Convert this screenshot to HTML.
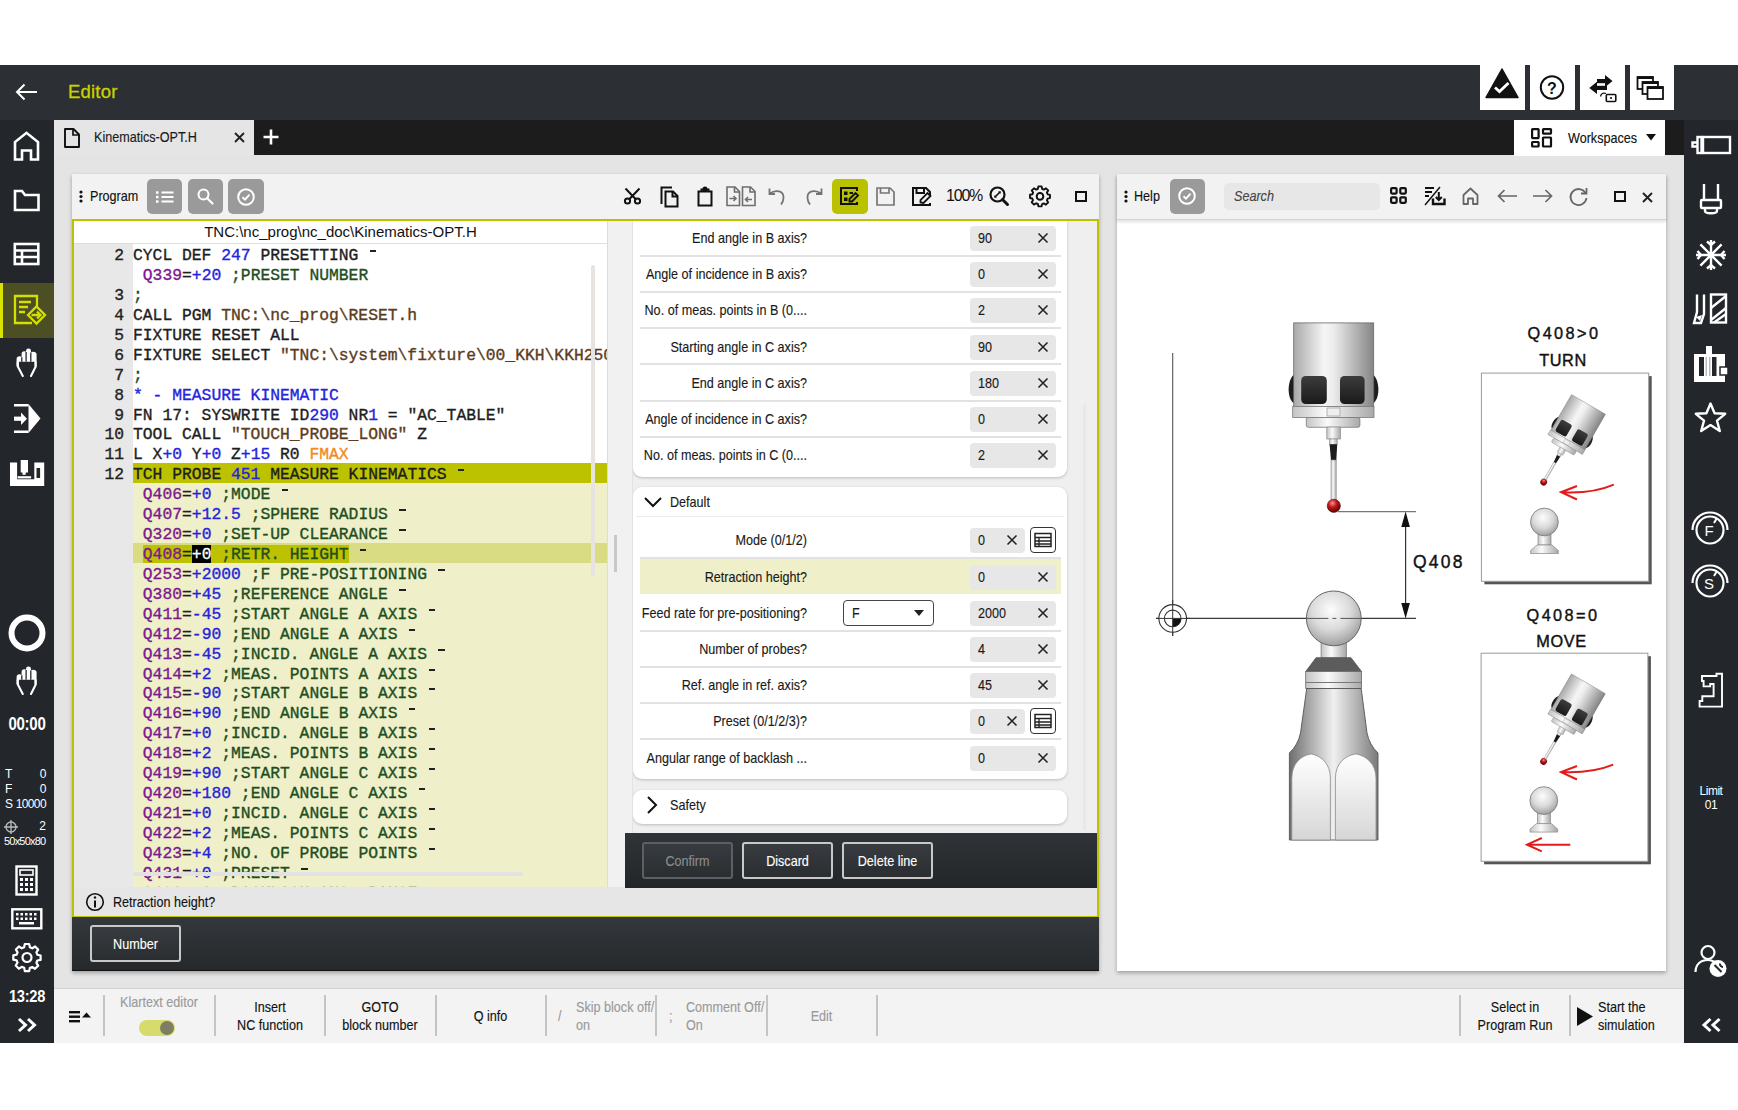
<!DOCTYPE html>
<html><head><meta charset="utf-8">
<style>
*{box-sizing:border-box;margin:0;padding:0}
html,body{width:1738px;height:1110px;overflow:hidden;background:#fff;position:relative;font-family:"Liberation Sans",sans-serif;color:#1a1a1a}
.a{position:absolute}
.s{font-size:15px;white-space:nowrap;transform:scaleX(.84);transform-origin:0 50%;-webkit-text-stroke:0.15px currentColor}
.sr{transform-origin:100% 50%}.sc{transform-origin:50% 50%}
.m{font-family:"Liberation Mono",monospace;font-size:16.33px;white-space:pre;line-height:20px;-webkit-text-stroke:0.35px currentColor;padding-top:2px}
svg{position:absolute;overflow:visible}
</style></head><body>

<!-- header -->
<div class="a" style="left:0;top:65px;width:1738px;height:55px;background:#2c3034"></div>
<!-- left sidebar -->
<div class="a" style="left:0;top:120px;width:54px;height:923px;background:#23272b"></div>
<!-- right sidebar -->
<div class="a" style="left:1684px;top:120px;width:54px;height:923px;background:#23272b"></div>
<!-- tab bar -->
<div class="a" style="left:54px;top:120px;width:1630px;height:35px;background:#1c1c1c"></div>
<!-- main bg -->
<div class="a" style="left:54px;top:155px;width:1630px;height:833px;background:#e4e4e4"></div>
<!-- bottom bar -->
<div class="a" style="left:54px;top:988px;width:1630px;height:55px;background:#f3f3f3;border-top:1px solid #d2d2d2"></div>
<!-- EDITOR PANEL -->
<div class="a" style="left:72px;top:174px;width:1027px;height:797px;background:#f2f2f2;box-shadow:0 2px 4px rgba(0,0,0,.3)"></div>
<div class="a" style="left:72px;top:219px;width:1027px;height:699px;border:2px solid #bcc200;background:#e6e6e6"></div>
<!-- splitter -->
<div class="a" style="left:607px;top:221px;width:26px;height:666px;background:#f1f1f1;border-left:1px solid #dcdcdc;border-right:1px solid #e2e2e2"></div>
<div class="a" style="left:614px;top:535px;width:3px;height:37px;background:#c8c8c8"></div>
<!-- form area bg -->
<div class="a" style="left:633px;top:221px;width:464px;height:612px;background:#efefef"></div>
<!-- form action bar -->
<div class="a" style="left:625px;top:833px;width:472px;height:55px;background:linear-gradient(#303438,#222629)"></div>
<!-- info bar -->
<div class="a" style="left:74px;top:888px;width:1023px;height:28px;background:#e6e6e6"></div>
<!-- number bar -->
<div class="a" style="left:72px;top:917px;width:1027px;height:54px;background:linear-gradient(#34383c,#25292c);border-bottom:1px solid #111"></div>
<!-- HELP PANEL -->
<div class="a" style="left:1117px;top:174px;width:549px;height:797px;background:#fff;box-shadow:0 2px 4px rgba(0,0,0,.3)"></div>
<div class="a" style="left:1117px;top:174px;width:549px;height:46px;background:#f2f2f2;border-bottom:1px solid #d4d4d4;box-shadow:0 2px 3px rgba(0,0,0,.12)"></div>

<!-- editor toolbar -->
<svg width="4" height="14" style="left:79px;top:190px"><circle cx="2" cy="2" r="1.6" fill="#111"/><circle cx="2" cy="6.5" r="1.6" fill="#111"/><circle cx="2" cy="11" r="1.6" fill="#111"/></svg>
<div class="a s" style="left:90px;top:187px;line-height:18px;color:#111">Program</div>
<div class="a" style="left:147px;top:179px;width:35px;height:35px;background:#9a9a9a;border-radius:5px"></div>
<div class="a" style="left:188px;top:179px;width:35px;height:35px;background:#9a9a9a;border-radius:5px"></div>
<div class="a" style="left:228px;top:179px;width:36px;height:35px;background:#9a9a9a;border-radius:5px"></div>
<svg width="20" height="14" style="left:155px;top:190px"><g fill="#fff"><rect x="1" y="1.3" width="2.5" height="2.5"/><rect x="1" y="5.8" width="2.5" height="2.5"/><rect x="1" y="10.3" width="2.5" height="2.5"/><rect x="6.5" y="1.5" width="12" height="2"/><rect x="6.5" y="6" width="12" height="2"/><rect x="6.5" y="10.5" width="12" height="2"/></g></svg>
<svg width="20" height="20" style="left:196px;top:187px"><circle cx="7.5" cy="7.5" r="5" fill="none" stroke="#fff" stroke-width="2"/><path d="M11 11L16.5 16.5" stroke="#fff" stroke-width="2.2" stroke-linecap="round"/></svg>
<svg width="20" height="20" style="left:236px;top:187px"><circle cx="10" cy="10" r="7.8" fill="none" stroke="#fff" stroke-width="2"/><path d="M6.5 10.2L9 12.6L13.5 7.6" fill="none" stroke="#fff" stroke-width="2"/></svg>
<!-- scissors -->
<svg width="20" height="18" style="left:623px;top:187px"><g fill="none" stroke="#111" stroke-width="2"><path d="M2.5 1.5L14 13.5M16.5 1.5L5 13.5"/><circle cx="4.5" cy="14" r="2.6" fill="#f2f2f2"/><circle cx="14.5" cy="14" r="2.6" fill="#f2f2f2"/></g></svg>
<!-- copy -->
<svg width="20" height="22" style="left:660px;top:185.5px"><g fill="none" stroke="#111" stroke-width="2"><path d="M1.5 18V1.5H12"/><path d="M5.5 5.5H13L17.5 10V20.5H5.5Z"/><path d="M12.5 5.5V10.5H17.5"/></g></svg>
<!-- paste -->
<svg width="17" height="21" style="left:697px;top:186px"><g fill="none" stroke="#111" stroke-width="2"><rect x="1.5" y="5.5" width="13" height="14"/><path d="M4.5 5.5V3.5H11.5V5.5"/><circle cx="8" cy="3" r="1.5" fill="#111"/></g></svg>
<!-- insert docs (gray) -->
<svg width="31" height="21" style="left:726px;top:186px"><g fill="none" stroke="#6e6e6e" stroke-width="1.6"><path d="M1 1H9L13.5 5.5V19.5H1Z"/><path d="M8.5 1V6H13.5"/><path d="M16.5 1H24.5L29 5.5V19.5H16.5Z"/><path d="M24 1V6H29"/><path d="M3.5 12.5H10M7.5 10L10 12.5L7.5 15"/><path d="M26 13.5H19.5M22 11L19.5 13.5L22 16"/></g></svg>
<!-- undo / redo (gray) -->
<svg width="18" height="18" style="left:768px;top:187px"><path d="M2 6.5C8 2 16 4 15.5 11C15.3 14 14.5 16 13 17.5M1.5 1.5V7H7" fill="none" stroke="#737373" stroke-width="1.8"/></svg>
<svg width="18" height="18" style="left:805px;top:187px"><path d="M16 6.5C10 2 2 4 2.5 11C2.7 14 3.5 16 5 17.5M16.5 1.5V7H11" fill="none" stroke="#737373" stroke-width="1.8"/></svg>
<!-- active edit btn -->
<div class="a" style="left:832px;top:179px;width:36px;height:35px;background:#bac200;border-radius:5px"></div>
<svg width="20" height="19" style="left:840px;top:187px"><g fill="none" stroke="#111" stroke-width="2"><path d="M17 4V1H1V17H17V15"/></g><rect x="4" y="4.5" width="3.5" height="3.5" fill="#111"/><rect x="4" y="10.5" width="3.5" height="3.5" fill="#111"/><path d="M9.5 6H13M9.5 12L15.5 6L18 8.5L12 14.5H9.5Z" fill="none" stroke="#111" stroke-width="1.9"/></svg>
<!-- save gray -->
<svg width="19" height="19" style="left:876px;top:187px"><g fill="none" stroke="#777" stroke-width="1.7"><path d="M1 1H14L18 5V18H1Z"/><path d="M4.5 1V6H13V1"/></g></svg>
<!-- save as -->
<svg width="20" height="19" style="left:912px;top:187px"><g fill="none" stroke="#111" stroke-width="2"><path d="M18 8V5L14 1H1V18H18V16"/><path d="M4.5 1V6H12V1"/><path d="M8.5 15.5V13L15.5 6L18.5 9L11.5 16Z" stroke-width="1.8"/></g></svg>
<div class="a" style="left:946px;top:187px;line-height:18px;letter-spacing:-1.2px;color:#111">100%</div>
<!-- zoom -->
<svg width="21" height="21" style="left:989px;top:186px"><circle cx="8.5" cy="8.5" r="7" fill="none" stroke="#111" stroke-width="2.2"/><path d="M13.5 13.5L18.5 18.5" stroke="#111" stroke-width="3" stroke-linecap="round"/><path d="M6 9.5V11H7.5M11 7.5V6H9.5M6 11L11 6" fill="none" stroke="#111" stroke-width="1.6"/></svg>
<!-- gear -->
<svg width="22" height="22" viewBox="-11 -11 22 22" style="left:1029px;top:185px"><path id="gearp" d="M-1.6 -9.6H1.6L2.1 -7.2L3.9 -6.4L6 -7.7L8.2 -5.5L6.9 -3.4L7.7 -1.6L10 -1.1V2.1L7.6 2.6L6.9 4.3L8.2 6.4L5.9 8.7L3.8 7.4L2.1 8.1L1.6 10.4H-1.6L-2.1 8L-3.9 7.3L-6 8.6L-8.3 6.3L-7 4.2L-7.7 2.5L-10 2V-1.2L-7.6 -1.7L-6.9 -3.4L-8.2 -5.5L-6 -7.7L-3.9 -6.4L-2.1 -7.2Z" fill="none" stroke="#111" stroke-width="1.9" stroke-linejoin="round"/><circle cx="0" cy="0.4" r="3.3" fill="none" stroke="#111" stroke-width="2"/></svg>
<div class="a" style="left:1075px;top:191px;width:12px;height:11px;border:2.4px solid #111"></div>

<div class="a" style="left:74px;top:221px;width:533px;height:666px;background:#fff;overflow:hidden">
<div class="a" style="left:0;top:0;width:533px;height:23px;background:#fff;border-bottom:1px solid #dedede;text-align:center;font-size:15px;white-space:nowrap;line-height:22px;color:#111">TNC:\nc_prog\nc_doc\Kinematics-OPT.H</div>
<div class="a" style="left:0;top:23px;width:59px;height:643px;background:#e8e8e8"></div>
<div class="a m" style="left:0;top:23.2px;width:50px;text-align:right;color:#222">2</div>
<div class="a m" style="left:59px;top:23.2px"><span style="color:#1e1e1e">CYCL DEF </span><span style="color:#2424dc">247</span><span style="color:#1e1e1e"> PRESETTING </span><span style="display:inline-block;width:9.8px;height:11px;vertical-align:top;position:relative"><i style="position:absolute;left:1.5px;top:4px;width:6.5px;height:2px;background:#222"></i></span></div>
<div class="a m" style="left:59px;top:43.12px"><span style="color:#1e1e1e"> </span><span style="color:#7e1890">Q339</span><span style="color:#1e1e1e">=</span><span style="color:#2424dc">+20</span><span style="color:#1e4e1e"> ;PRESET NUMBER</span></div>
<div class="a m" style="left:0;top:63.04px;width:50px;text-align:right;color:#222">3</div>
<div class="a m" style="left:59px;top:63.04px"><span style="color:#1e4e1e">;</span></div>
<div class="a m" style="left:0;top:82.96px;width:50px;text-align:right;color:#222">4</div>
<div class="a m" style="left:59px;top:82.96px"><span style="color:#1e1e1e">CALL PGM </span><span style="color:#5c3c1c">TNC:\nc_prog\RESET.h</span></div>
<div class="a m" style="left:0;top:102.88px;width:50px;text-align:right;color:#222">5</div>
<div class="a m" style="left:59px;top:102.88px"><span style="color:#1e1e1e">FIXTURE RESET ALL</span></div>
<div class="a m" style="left:0;top:122.8px;width:50px;text-align:right;color:#222">6</div>
<div class="a m" style="left:59px;top:122.8px"><span style="color:#1e1e1e">FIXTURE SELECT </span><span style="color:#5c3c1c">"TNC:\system\fixture\00_KKH\KKH250"</span></div>
<div class="a m" style="left:0;top:142.72px;width:50px;text-align:right;color:#222">7</div>
<div class="a m" style="left:59px;top:142.72px"><span style="color:#1e4e1e">;</span></div>
<div class="a m" style="left:0;top:162.64px;width:50px;text-align:right;color:#222">8</div>
<div class="a m" style="left:59px;top:162.64px"><span style="color:#2424dc">* - MEASURE KINEMATIC</span></div>
<div class="a m" style="left:0;top:182.56px;width:50px;text-align:right;color:#222">9</div>
<div class="a m" style="left:59px;top:182.56px"><span style="color:#1e1e1e">FN 17: SYSWRITE ID</span><span style="color:#2424dc">290</span><span style="color:#1e1e1e"> NR</span><span style="color:#2424dc">1</span><span style="color:#1e1e1e"> = "AC_TABLE"</span></div>
<div class="a m" style="left:0;top:202.48px;width:50px;text-align:right;color:#222">10</div>
<div class="a m" style="left:59px;top:202.48px"><span style="color:#1e1e1e">TOOL CALL </span><span style="color:#5c3c1c">"TOUCH_PROBE_LONG"</span><span style="color:#1e1e1e"> Z</span></div>
<div class="a m" style="left:0;top:222.4px;width:50px;text-align:right;color:#222">11</div>
<div class="a m" style="left:59px;top:222.4px"><span style="color:#1e1e1e">L X</span><span style="color:#2424dc">+0</span><span style="color:#1e1e1e"> Y</span><span style="color:#2424dc">+0</span><span style="color:#1e1e1e"> Z</span><span style="color:#2424dc">+15</span><span style="color:#1e1e1e"> R0 </span><span style="color:#f28a1e">FMAX</span></div>
<div class="a" style="left:59px;top:242.32px;width:474px;height:20px;background:#bcc200"></div>
<div class="a m" style="left:0;top:242.32px;width:50px;text-align:right;color:#222">12</div>
<div class="a m" style="left:59px;top:242.32px"><span style="color:#1e1e1e">TCH PROBE </span><span style="color:#2424dc">451</span><span style="color:#1e1e1e"> MEASURE KINEMATICS </span><span style="display:inline-block;width:9.8px;height:11px;vertical-align:top;position:relative"><i style="position:absolute;left:1.5px;top:4px;width:6.5px;height:2px;background:#222"></i></span></div>
<div class="a" style="left:59px;top:262.24px;width:474px;height:20px;background:#eff0ca"></div>
<div class="a m" style="left:59px;top:262.24px"><span style="color:#1e1e1e"> </span><span style="color:#7e1890">Q406</span><span style="color:#1e1e1e">=</span><span style="color:#2424dc">+0</span><span style="color:#1e4e1e"> ;MODE</span><span style="color:#1e1e1e"> </span><span style="display:inline-block;width:9.8px;height:11px;vertical-align:top;position:relative"><i style="position:absolute;left:1.5px;top:4px;width:6.5px;height:2px;background:#222"></i></span></div>
<div class="a" style="left:59px;top:282.16px;width:474px;height:20px;background:#eff0ca"></div>
<div class="a m" style="left:59px;top:282.16px"><span style="color:#1e1e1e"> </span><span style="color:#7e1890">Q407</span><span style="color:#1e1e1e">=</span><span style="color:#2424dc">+12.5</span><span style="color:#1e4e1e"> ;SPHERE RADIUS</span><span style="color:#1e1e1e"> </span><span style="display:inline-block;width:9.8px;height:11px;vertical-align:top;position:relative"><i style="position:absolute;left:1.5px;top:4px;width:6.5px;height:2px;background:#222"></i></span></div>
<div class="a" style="left:59px;top:302.08px;width:474px;height:20px;background:#eff0ca"></div>
<div class="a m" style="left:59px;top:302.08px"><span style="color:#1e1e1e"> </span><span style="color:#7e1890">Q320</span><span style="color:#1e1e1e">=</span><span style="color:#2424dc">+0</span><span style="color:#1e4e1e"> ;SET-UP CLEARANCE</span><span style="color:#1e1e1e"> </span><span style="display:inline-block;width:9.8px;height:11px;vertical-align:top;position:relative"><i style="position:absolute;left:1.5px;top:4px;width:6.5px;height:2px;background:#222"></i></span></div>
<div class="a" style="left:59px;top:322.0px;width:474px;height:20px;background:#d9dc82"></div>
<div class="a m" style="left:59px;top:322.0px"><span style="color:#1e1e1e"> </span><span style="background:#bcc200"><span style="color:#7e1890">Q408</span><span style="color:#1e1e1e">=</span><span style="background:#000;color:#fff">+0</span><span style="color:#1e4e1e"> ;RETR. HEIGHT</span></span><span style="color:#1e1e1e"> </span><span style="display:inline-block;width:9.8px;height:11px;vertical-align:top;position:relative"><i style="position:absolute;left:1.5px;top:4px;width:6.5px;height:2px;background:#222"></i></span></div>
<div class="a" style="left:59px;top:341.92px;width:474px;height:20px;background:#eff0ca"></div>
<div class="a m" style="left:59px;top:341.92px"><span style="color:#1e1e1e"> </span><span style="color:#7e1890">Q253</span><span style="color:#1e1e1e">=</span><span style="color:#2424dc">+2000</span><span style="color:#1e4e1e"> ;F PRE-POSITIONING</span><span style="color:#1e1e1e"> </span><span style="display:inline-block;width:9.8px;height:11px;vertical-align:top;position:relative"><i style="position:absolute;left:1.5px;top:4px;width:6.5px;height:2px;background:#222"></i></span></div>
<div class="a" style="left:59px;top:361.84px;width:474px;height:20px;background:#eff0ca"></div>
<div class="a m" style="left:59px;top:361.84px"><span style="color:#1e1e1e"> </span><span style="color:#7e1890">Q380</span><span style="color:#1e1e1e">=</span><span style="color:#2424dc">+45</span><span style="color:#1e4e1e"> ;REFERENCE ANGLE</span><span style="color:#1e1e1e"> </span><span style="display:inline-block;width:9.8px;height:11px;vertical-align:top;position:relative"><i style="position:absolute;left:1.5px;top:4px;width:6.5px;height:2px;background:#222"></i></span></div>
<div class="a" style="left:59px;top:381.76px;width:474px;height:20px;background:#eff0ca"></div>
<div class="a m" style="left:59px;top:381.76px"><span style="color:#1e1e1e"> </span><span style="color:#7e1890">Q411</span><span style="color:#1e1e1e">=</span><span style="color:#2424dc">-45</span><span style="color:#1e4e1e"> ;START ANGLE A AXIS</span><span style="color:#1e1e1e"> </span><span style="display:inline-block;width:9.8px;height:11px;vertical-align:top;position:relative"><i style="position:absolute;left:1.5px;top:4px;width:6.5px;height:2px;background:#222"></i></span></div>
<div class="a" style="left:59px;top:401.68px;width:474px;height:20px;background:#eff0ca"></div>
<div class="a m" style="left:59px;top:401.68px"><span style="color:#1e1e1e"> </span><span style="color:#7e1890">Q412</span><span style="color:#1e1e1e">=</span><span style="color:#2424dc">-90</span><span style="color:#1e4e1e"> ;END ANGLE A AXIS</span><span style="color:#1e1e1e"> </span><span style="display:inline-block;width:9.8px;height:11px;vertical-align:top;position:relative"><i style="position:absolute;left:1.5px;top:4px;width:6.5px;height:2px;background:#222"></i></span></div>
<div class="a" style="left:59px;top:421.6px;width:474px;height:20px;background:#eff0ca"></div>
<div class="a m" style="left:59px;top:421.6px"><span style="color:#1e1e1e"> </span><span style="color:#7e1890">Q413</span><span style="color:#1e1e1e">=</span><span style="color:#2424dc">-45</span><span style="color:#1e4e1e"> ;INCID. ANGLE A AXIS</span><span style="color:#1e1e1e"> </span><span style="display:inline-block;width:9.8px;height:11px;vertical-align:top;position:relative"><i style="position:absolute;left:1.5px;top:4px;width:6.5px;height:2px;background:#222"></i></span></div>
<div class="a" style="left:59px;top:441.52px;width:474px;height:20px;background:#eff0ca"></div>
<div class="a m" style="left:59px;top:441.52px"><span style="color:#1e1e1e"> </span><span style="color:#7e1890">Q414</span><span style="color:#1e1e1e">=</span><span style="color:#2424dc">+2</span><span style="color:#1e4e1e"> ;MEAS. POINTS A AXIS</span><span style="color:#1e1e1e"> </span><span style="display:inline-block;width:9.8px;height:11px;vertical-align:top;position:relative"><i style="position:absolute;left:1.5px;top:4px;width:6.5px;height:2px;background:#222"></i></span></div>
<div class="a" style="left:59px;top:461.44px;width:474px;height:20px;background:#eff0ca"></div>
<div class="a m" style="left:59px;top:461.44px"><span style="color:#1e1e1e"> </span><span style="color:#7e1890">Q415</span><span style="color:#1e1e1e">=</span><span style="color:#2424dc">-90</span><span style="color:#1e4e1e"> ;START ANGLE B AXIS</span><span style="color:#1e1e1e"> </span><span style="display:inline-block;width:9.8px;height:11px;vertical-align:top;position:relative"><i style="position:absolute;left:1.5px;top:4px;width:6.5px;height:2px;background:#222"></i></span></div>
<div class="a" style="left:59px;top:481.36px;width:474px;height:20px;background:#eff0ca"></div>
<div class="a m" style="left:59px;top:481.36px"><span style="color:#1e1e1e"> </span><span style="color:#7e1890">Q416</span><span style="color:#1e1e1e">=</span><span style="color:#2424dc">+90</span><span style="color:#1e4e1e"> ;END ANGLE B AXIS</span><span style="color:#1e1e1e"> </span><span style="display:inline-block;width:9.8px;height:11px;vertical-align:top;position:relative"><i style="position:absolute;left:1.5px;top:4px;width:6.5px;height:2px;background:#222"></i></span></div>
<div class="a" style="left:59px;top:501.28px;width:474px;height:20px;background:#eff0ca"></div>
<div class="a m" style="left:59px;top:501.28px"><span style="color:#1e1e1e"> </span><span style="color:#7e1890">Q417</span><span style="color:#1e1e1e">=</span><span style="color:#2424dc">+0</span><span style="color:#1e4e1e"> ;INCID. ANGLE B AXIS</span><span style="color:#1e1e1e"> </span><span style="display:inline-block;width:9.8px;height:11px;vertical-align:top;position:relative"><i style="position:absolute;left:1.5px;top:4px;width:6.5px;height:2px;background:#222"></i></span></div>
<div class="a" style="left:59px;top:521.2px;width:474px;height:20px;background:#eff0ca"></div>
<div class="a m" style="left:59px;top:521.2px"><span style="color:#1e1e1e"> </span><span style="color:#7e1890">Q418</span><span style="color:#1e1e1e">=</span><span style="color:#2424dc">+2</span><span style="color:#1e4e1e"> ;MEAS. POINTS B AXIS</span><span style="color:#1e1e1e"> </span><span style="display:inline-block;width:9.8px;height:11px;vertical-align:top;position:relative"><i style="position:absolute;left:1.5px;top:4px;width:6.5px;height:2px;background:#222"></i></span></div>
<div class="a" style="left:59px;top:541.12px;width:474px;height:20px;background:#eff0ca"></div>
<div class="a m" style="left:59px;top:541.12px"><span style="color:#1e1e1e"> </span><span style="color:#7e1890">Q419</span><span style="color:#1e1e1e">=</span><span style="color:#2424dc">+90</span><span style="color:#1e4e1e"> ;START ANGLE C AXIS</span><span style="color:#1e1e1e"> </span><span style="display:inline-block;width:9.8px;height:11px;vertical-align:top;position:relative"><i style="position:absolute;left:1.5px;top:4px;width:6.5px;height:2px;background:#222"></i></span></div>
<div class="a" style="left:59px;top:561.04px;width:474px;height:20px;background:#eff0ca"></div>
<div class="a m" style="left:59px;top:561.04px"><span style="color:#1e1e1e"> </span><span style="color:#7e1890">Q420</span><span style="color:#1e1e1e">=</span><span style="color:#2424dc">+180</span><span style="color:#1e4e1e"> ;END ANGLE C AXIS</span><span style="color:#1e1e1e"> </span><span style="display:inline-block;width:9.8px;height:11px;vertical-align:top;position:relative"><i style="position:absolute;left:1.5px;top:4px;width:6.5px;height:2px;background:#222"></i></span></div>
<div class="a" style="left:59px;top:580.96px;width:474px;height:20px;background:#eff0ca"></div>
<div class="a m" style="left:59px;top:580.96px"><span style="color:#1e1e1e"> </span><span style="color:#7e1890">Q421</span><span style="color:#1e1e1e">=</span><span style="color:#2424dc">+0</span><span style="color:#1e4e1e"> ;INCID. ANGLE C AXIS</span><span style="color:#1e1e1e"> </span><span style="display:inline-block;width:9.8px;height:11px;vertical-align:top;position:relative"><i style="position:absolute;left:1.5px;top:4px;width:6.5px;height:2px;background:#222"></i></span></div>
<div class="a" style="left:59px;top:600.88px;width:474px;height:20px;background:#eff0ca"></div>
<div class="a m" style="left:59px;top:600.88px"><span style="color:#1e1e1e"> </span><span style="color:#7e1890">Q422</span><span style="color:#1e1e1e">=</span><span style="color:#2424dc">+2</span><span style="color:#1e4e1e"> ;MEAS. POINTS C AXIS</span><span style="color:#1e1e1e"> </span><span style="display:inline-block;width:9.8px;height:11px;vertical-align:top;position:relative"><i style="position:absolute;left:1.5px;top:4px;width:6.5px;height:2px;background:#222"></i></span></div>
<div class="a" style="left:59px;top:620.8px;width:474px;height:20px;background:#eff0ca"></div>
<div class="a m" style="left:59px;top:620.8px"><span style="color:#1e1e1e"> </span><span style="color:#7e1890">Q423</span><span style="color:#1e1e1e">=</span><span style="color:#2424dc">+4</span><span style="color:#1e4e1e"> ;NO. OF PROBE POINTS</span><span style="color:#1e1e1e"> </span><span style="display:inline-block;width:9.8px;height:11px;vertical-align:top;position:relative"><i style="position:absolute;left:1.5px;top:4px;width:6.5px;height:2px;background:#222"></i></span></div>
<div class="a" style="left:59px;top:640.72px;width:474px;height:20px;background:#eff0ca"></div>
<div class="a m" style="left:59px;top:640.72px"><span style="color:#1e1e1e"> </span><span style="color:#7e1890">Q431</span><span style="color:#1e1e1e">=</span><span style="color:#2424dc">+0</span><span style="color:#1e4e1e"> ;PRESET</span><span style="color:#1e1e1e"> </span><span style="display:inline-block;width:9.8px;height:11px;vertical-align:top;position:relative"><i style="position:absolute;left:1.5px;top:4px;width:6.5px;height:2px;background:#222"></i></span></div>
<div class="a" style="left:59px;top:660.64px;width:474px;height:20px;background:#eff0ca"></div>
<div class="a m" style="left:59px;top:660.64px"><span style="color:#1e1e1e"> </span><span style="color:#7e1890">Q432</span><span style="color:#1e1e1e">=</span><span style="color:#2424dc">+0</span><span style="color:#1e4e1e"> ;BACKLASH ANG. RANGE</span><span style="color:#1e1e1e"> </span><span style="display:inline-block;width:9.8px;height:11px;vertical-align:top;position:relative"><i style="position:absolute;left:1.5px;top:4px;width:6.5px;height:2px;background:#222"></i></span></div>
<div class="a" style="left:517px;top:44px;width:4px;height:311px;background:#e6e3e0;border-radius:2px"></div>
<div class="a" style="left:59px;top:651px;width:390px;height:4px;background:#e2e2e2;border-radius:2px"></div>
</div>
<div class="a" style="left:633px;top:221px;width:464px;height:612px;overflow:hidden"><div class="a" style="left:-633px;top:-221px;width:1738px;height:1110px">
<div class="a" style="left:633px;top:190px;width:434px;height:287px;background:#fff;border-radius:9px;box-shadow:0 1px 3px rgba(0,0,0,.22)"></div>
<div class="a" style="left:640px;top:255px;width:421px;height:2px;background:#e2e2e2"></div>
<div class="a" style="left:640px;top:291px;width:421px;height:2px;background:#e2e2e2"></div>
<div class="a" style="left:640px;top:327px;width:421px;height:2px;background:#e2e2e2"></div>
<div class="a" style="left:640px;top:363px;width:421px;height:2px;background:#e2e2e2"></div>
<div class="a" style="left:640px;top:400px;width:421px;height:2px;background:#e2e2e2"></div>
<div class="a" style="left:640px;top:436px;width:421px;height:2px;background:#e2e2e2"></div>
<div class="a s sr" style="left:590px;top:229px;width:217px;height:18px;line-height:18px;text-align:right;color:#1a1a1a">End angle in B axis?</div>
<div class="a" style="left:970px;top:225.5px;width:86px;height:25px;background:#e7e7e7;border-radius:4px"></div>
<div class="a s" style="left:978px;top:229px;height:18px;line-height:18px;color:#1a1a1a">90</div>
<div class="a" style="left:1037px;top:232px;width:12px;height:12px"><svg width="12" height="12" viewBox="0 0 12 12" style="position:static;display:block"><path d="M1.5 1.5L10.5 10.5M10.5 1.5L1.5 10.5" stroke="#222" stroke-width="1.55"/></svg></div>
<div class="a s sr" style="left:590px;top:265px;width:217px;height:18px;line-height:18px;text-align:right;color:#1a1a1a">Angle of incidence in B axis?</div>
<div class="a" style="left:970px;top:261.5px;width:86px;height:25px;background:#e7e7e7;border-radius:4px"></div>
<div class="a s" style="left:978px;top:265px;height:18px;line-height:18px;color:#1a1a1a">0</div>
<div class="a" style="left:1037px;top:268px;width:12px;height:12px"><svg width="12" height="12" viewBox="0 0 12 12" style="position:static;display:block"><path d="M1.5 1.5L10.5 10.5M10.5 1.5L1.5 10.5" stroke="#222" stroke-width="1.55"/></svg></div>
<div class="a s sr" style="left:590px;top:301px;width:217px;height:18px;line-height:18px;text-align:right;color:#1a1a1a">No. of meas. points in B (0....</div>
<div class="a" style="left:970px;top:297.5px;width:86px;height:25px;background:#e7e7e7;border-radius:4px"></div>
<div class="a s" style="left:978px;top:301px;height:18px;line-height:18px;color:#1a1a1a">2</div>
<div class="a" style="left:1037px;top:304px;width:12px;height:12px"><svg width="12" height="12" viewBox="0 0 12 12" style="position:static;display:block"><path d="M1.5 1.5L10.5 10.5M10.5 1.5L1.5 10.5" stroke="#222" stroke-width="1.55"/></svg></div>
<div class="a s sr" style="left:590px;top:338px;width:217px;height:18px;line-height:18px;text-align:right;color:#1a1a1a">Starting angle in C axis?</div>
<div class="a" style="left:970px;top:334.5px;width:86px;height:25px;background:#e7e7e7;border-radius:4px"></div>
<div class="a s" style="left:978px;top:338px;height:18px;line-height:18px;color:#1a1a1a">90</div>
<div class="a" style="left:1037px;top:341px;width:12px;height:12px"><svg width="12" height="12" viewBox="0 0 12 12" style="position:static;display:block"><path d="M1.5 1.5L10.5 10.5M10.5 1.5L1.5 10.5" stroke="#222" stroke-width="1.55"/></svg></div>
<div class="a s sr" style="left:590px;top:374px;width:217px;height:18px;line-height:18px;text-align:right;color:#1a1a1a">End angle in C axis?</div>
<div class="a" style="left:970px;top:370.5px;width:86px;height:25px;background:#e7e7e7;border-radius:4px"></div>
<div class="a s" style="left:978px;top:374px;height:18px;line-height:18px;color:#1a1a1a">180</div>
<div class="a" style="left:1037px;top:377px;width:12px;height:12px"><svg width="12" height="12" viewBox="0 0 12 12" style="position:static;display:block"><path d="M1.5 1.5L10.5 10.5M10.5 1.5L1.5 10.5" stroke="#222" stroke-width="1.55"/></svg></div>
<div class="a s sr" style="left:590px;top:410px;width:217px;height:18px;line-height:18px;text-align:right;color:#1a1a1a">Angle of incidence in C axis?</div>
<div class="a" style="left:970px;top:406.5px;width:86px;height:25px;background:#e7e7e7;border-radius:4px"></div>
<div class="a s" style="left:978px;top:410px;height:18px;line-height:18px;color:#1a1a1a">0</div>
<div class="a" style="left:1037px;top:413px;width:12px;height:12px"><svg width="12" height="12" viewBox="0 0 12 12" style="position:static;display:block"><path d="M1.5 1.5L10.5 10.5M10.5 1.5L1.5 10.5" stroke="#222" stroke-width="1.55"/></svg></div>
<div class="a s sr" style="left:590px;top:446px;width:217px;height:18px;line-height:18px;text-align:right;color:#1a1a1a">No. of meas. points in C (0....</div>
<div class="a" style="left:970px;top:442.5px;width:86px;height:25px;background:#e7e7e7;border-radius:4px"></div>
<div class="a s" style="left:978px;top:446px;height:18px;line-height:18px;color:#1a1a1a">2</div>
<div class="a" style="left:1037px;top:449px;width:12px;height:12px"><svg width="12" height="12" viewBox="0 0 12 12" style="position:static;display:block"><path d="M1.5 1.5L10.5 10.5M10.5 1.5L1.5 10.5" stroke="#222" stroke-width="1.55"/></svg></div>
<div class="a" style="left:633px;top:487px;width:434px;height:292px;background:#fff;border-radius:9px;box-shadow:0 1px 3px rgba(0,0,0,.22)"></div>
<svg width="18" height="10" style="left:644px;top:497px"><path d="M1 1L9 9L17 1" fill="none" stroke="#111" stroke-width="2"/></svg>
<div class="a s" style="left:670px;top:493px;line-height:18px">Default</div>
<div class="a" style="left:636px;top:516px;width:428px;height:1px;background:#ececec"></div>
<div class="a s sr" style="left:590px;top:531px;width:217px;height:18px;line-height:18px;text-align:right;color:#1a1a1a">Mode (0/1/2)</div>
<div class="a" style="left:970px;top:527.5px;width:55px;height:25px;background:#e7e7e7;border-radius:4px"></div>
<div class="a s" style="left:978px;top:531px;height:18px;line-height:18px;color:#1a1a1a">0</div>
<div class="a" style="left:1006px;top:534px;width:12px;height:12px"><svg width="12" height="12" viewBox="0 0 12 12" style="position:static;display:block"><path d="M1.5 1.5L10.5 10.5M10.5 1.5L1.5 10.5" stroke="#222" stroke-width="1.55"/></svg></div>
<div class="a" style="left:1030px;top:527px;width:26px;height:26px;border:1.5px solid #333;border-radius:4px;background:#fff"><svg width="26" height="26" style="left:-1.5px;top:-1.5px"><rect x="5" y="6.5" width="16" height="13" fill="none" stroke="#222" stroke-width="1.5"/><path d="M5 10.5H21M5 14H21M5 17H21M9 10.5V19.5" stroke="#222" stroke-width="1.3"/></svg></div>
<div class="a" style="left:640px;top:557px;width:421px;height:2px;background:#e2e2e2"></div>
<div class="a" style="left:640px;top:559px;width:421px;height:35px;background:#eff0c9"></div>
<div class="a s sr" style="left:590px;top:568px;width:217px;height:18px;line-height:18px;text-align:right;color:#1a1a1a">Retraction height?</div>
<div class="a" style="left:970px;top:564.5px;width:86px;height:25px;background:#e7e7e7;border-radius:4px"></div>
<div class="a s" style="left:978px;top:568px;height:18px;line-height:18px;color:#1a1a1a">0</div>
<div class="a" style="left:1037px;top:571px;width:12px;height:12px"><svg width="12" height="12" viewBox="0 0 12 12" style="position:static;display:block"><path d="M1.5 1.5L10.5 10.5M10.5 1.5L1.5 10.5" stroke="#222" stroke-width="1.55"/></svg></div>
<div class="a s sr" style="left:590px;top:604px;width:217px;height:18px;line-height:18px;text-align:right;color:#1a1a1a">Feed rate for pre-positioning?</div>
<div class="a" style="left:970px;top:600.5px;width:86px;height:25px;background:#e7e7e7;border-radius:4px"></div>
<div class="a s" style="left:978px;top:604px;height:18px;line-height:18px;color:#1a1a1a">2000</div>
<div class="a" style="left:1037px;top:607px;width:12px;height:12px"><svg width="12" height="12" viewBox="0 0 12 12" style="position:static;display:block"><path d="M1.5 1.5L10.5 10.5M10.5 1.5L1.5 10.5" stroke="#222" stroke-width="1.55"/></svg></div>
<div class="a" style="left:843px;top:600px;width:91px;height:26px;border:1.5px solid #444;border-radius:4px;background:#fff"></div>
<div class="a s" style="left:852px;top:604px;line-height:18px">F</div>
<svg width="10" height="6" style="left:914px;top:610px"><path d="M0 0H10L5 6Z" fill="#222"/></svg>
<div class="a" style="left:640px;top:630px;width:421px;height:2px;background:#e2e2e2"></div>
<div class="a" style="left:640px;top:666px;width:421px;height:2px;background:#e2e2e2"></div>
<div class="a" style="left:640px;top:702px;width:421px;height:2px;background:#e2e2e2"></div>
<div class="a" style="left:640px;top:738px;width:421px;height:2px;background:#e2e2e2"></div>
<div class="a s sr" style="left:590px;top:640px;width:217px;height:18px;line-height:18px;text-align:right;color:#1a1a1a">Number of probes?</div>
<div class="a" style="left:970px;top:636.5px;width:86px;height:25px;background:#e7e7e7;border-radius:4px"></div>
<div class="a s" style="left:978px;top:640px;height:18px;line-height:18px;color:#1a1a1a">4</div>
<div class="a" style="left:1037px;top:643px;width:12px;height:12px"><svg width="12" height="12" viewBox="0 0 12 12" style="position:static;display:block"><path d="M1.5 1.5L10.5 10.5M10.5 1.5L1.5 10.5" stroke="#222" stroke-width="1.55"/></svg></div>
<div class="a s sr" style="left:590px;top:676px;width:217px;height:18px;line-height:18px;text-align:right;color:#1a1a1a">Ref. angle in ref. axis?</div>
<div class="a" style="left:970px;top:672.5px;width:86px;height:25px;background:#e7e7e7;border-radius:4px"></div>
<div class="a s" style="left:978px;top:676px;height:18px;line-height:18px;color:#1a1a1a">45</div>
<div class="a" style="left:1037px;top:679px;width:12px;height:12px"><svg width="12" height="12" viewBox="0 0 12 12" style="position:static;display:block"><path d="M1.5 1.5L10.5 10.5M10.5 1.5L1.5 10.5" stroke="#222" stroke-width="1.55"/></svg></div>
<div class="a s sr" style="left:590px;top:712px;width:217px;height:18px;line-height:18px;text-align:right;color:#1a1a1a">Preset (0/1/2/3)?</div>
<div class="a" style="left:970px;top:708.5px;width:55px;height:25px;background:#e7e7e7;border-radius:4px"></div>
<div class="a s" style="left:978px;top:712px;height:18px;line-height:18px;color:#1a1a1a">0</div>
<div class="a" style="left:1006px;top:715px;width:12px;height:12px"><svg width="12" height="12" viewBox="0 0 12 12" style="position:static;display:block"><path d="M1.5 1.5L10.5 10.5M10.5 1.5L1.5 10.5" stroke="#222" stroke-width="1.55"/></svg></div>
<div class="a" style="left:1030px;top:708px;width:26px;height:26px;border:1.5px solid #333;border-radius:4px;background:#fff"><svg width="26" height="26" style="left:-1.5px;top:-1.5px"><rect x="5" y="6.5" width="16" height="13" fill="none" stroke="#222" stroke-width="1.5"/><path d="M5 10.5H21M5 14H21M5 17H21M9 10.5V19.5" stroke="#222" stroke-width="1.3"/></svg></div>
<div class="a s sr" style="left:590px;top:749px;width:217px;height:18px;line-height:18px;text-align:right;color:#1a1a1a">Angular range of backlash ...</div>
<div class="a" style="left:970px;top:745.5px;width:86px;height:25px;background:#e7e7e7;border-radius:4px"></div>
<div class="a s" style="left:978px;top:749px;height:18px;line-height:18px;color:#1a1a1a">0</div>
<div class="a" style="left:1037px;top:752px;width:12px;height:12px"><svg width="12" height="12" viewBox="0 0 12 12" style="position:static;display:block"><path d="M1.5 1.5L10.5 10.5M10.5 1.5L1.5 10.5" stroke="#222" stroke-width="1.55"/></svg></div>
<div class="a" style="left:633px;top:790px;width:434px;height:34px;background:#fff;border-radius:9px;box-shadow:0 1px 3px rgba(0,0,0,.22)"></div>
<svg width="10" height="18" style="left:647px;top:796px"><path d="M1 1L9 9L1 17" fill="none" stroke="#111" stroke-width="2"/></svg>
<div class="a s" style="left:670px;top:796px;line-height:18px">Safety</div>
<div class="a" style="left:1083px;top:404px;width:3px;height:426px;background:#e8e8e8"></div>
</div></div>
<div class="a" style="left:642px;top:842px;width:91px;height:37px;border:2px solid #5c6064;border-radius:3px;background:linear-gradient(#383c40,#2a2e31)"></div>
<div class="a s sc" style="left:642px;top:842px;width:91px;height:37px;color:#8a8e90;text-align:center;line-height:37px">Confirm</div>
<div class="a" style="left:742px;top:842px;width:91px;height:37px;border:2px solid #c8c8c8;border-radius:3px;background:linear-gradient(#383c40,#2a2e31)"></div>
<div class="a s sc" style="left:742px;top:842px;width:91px;height:37px;color:#fff;text-align:center;line-height:37px">Discard</div>
<div class="a" style="left:842px;top:842px;width:91px;height:37px;border:2px solid #c8c8c8;border-radius:3px;background:linear-gradient(#383c40,#2a2e31)"></div>
<div class="a s sc" style="left:842px;top:842px;width:91px;height:37px;color:#fff;text-align:center;line-height:37px">Delete line</div>
<!-- help toolbar -->
<svg width="4" height="14" style="left:1124px;top:190px"><circle cx="2" cy="2" r="1.6" fill="#111"/><circle cx="2" cy="6.5" r="1.6" fill="#111"/><circle cx="2" cy="11" r="1.6" fill="#111"/></svg>
<div class="a s" style="left:1134px;top:187px;line-height:18px;color:#111">Help</div>
<div class="a" style="left:1170px;top:179px;width:35px;height:35px;background:#9a9a9a;border-radius:5px"></div>
<svg width="20" height="20" style="left:1177px;top:186px"><circle cx="10" cy="10" r="7.8" fill="none" stroke="#fff" stroke-width="2"/><path d="M6.5 10.2L9 12.6L13.5 7.6" fill="none" stroke="#fff" stroke-width="2"/></svg>
<div class="a" style="left:1224px;top:183px;width:156px;height:27px;background:#e7e7e7;border-radius:5px"></div>
<div class="a s" style="left:1234px;top:187px;line-height:18px;font-style:italic;color:#444">Search</div>
<svg width="18" height="17" style="left:1390px;top:187px"><g fill="none" stroke="#111" stroke-width="2.2"><rect x="1.1" y="1.1" width="5.5" height="5.5" rx="1"/><rect x="10.3" y="1.1" width="5.5" height="5.5" rx="1"/><rect x="1.1" y="10.3" width="5.5" height="5.5" rx="1"/><rect x="10.3" y="10.3" width="5.5" height="5.5" rx="1"/></g></svg>
<svg width="22" height="20" style="left:1424px;top:186px"><g fill="#111"><rect x="1" y="1" width="9" height="2"/><rect x="1" y="5" width="7" height="2"/><rect x="1" y="9" width="4" height="2"/></g><path d="M1 19L16 1" stroke="#111" stroke-width="1.4"/><path d="M9 12.5V18H20.5V12.5" fill="none" stroke="#111" stroke-width="2.4"/><path d="M14.8 6V14M11.8 11L14.8 14L17.8 11" fill="none" stroke="#111" stroke-width="2"/></svg>
<svg width="18" height="18" style="left:1462px;top:187px"><path d="M1.5 17V8L8.5 1.5L15.5 8V17H11V11.5H6V17Z" fill="none" stroke="#666" stroke-width="1.8" stroke-linejoin="round"/></svg>
<svg width="21" height="14" style="left:1497px;top:189px"><path d="M20 7H1.5M7.5 1L1.5 7L7.5 13" fill="none" stroke="#666" stroke-width="1.7"/></svg>
<svg width="21" height="14" style="left:1532px;top:189px"><path d="M1 7H19.5M13.5 1L19.5 7L13.5 13" fill="none" stroke="#666" stroke-width="1.7"/></svg>
<svg width="20" height="19" style="left:1569px;top:187px"><path d="M16.5 6A8 8 0 1 0 17.5 11" fill="none" stroke="#666" stroke-width="1.8"/><path d="M17.5 1V6.5H12" fill="none" stroke="#666" stroke-width="1.8"/></svg>
<div class="a" style="left:1614px;top:191px;width:12px;height:11px;border:2.6px solid #111"></div>
<svg width="11" height="11" style="left:1642px;top:192px"><path d="M1 1L10 10M10 1L1 10" stroke="#222" stroke-width="1.9"/></svg>

<svg width="1738" height="1110" style="left:0;top:0" viewBox="0 0 1738 1110">
<defs>
<linearGradient id="gcyl" x1="0" x2="1" y1="0" y2="0"><stop offset="0" stop-color="#a9a9a9"/><stop offset="0.38" stop-color="#f6f6f6"/><stop offset="0.5" stop-color="#ececec"/><stop offset="1" stop-color="#858585"/></linearGradient>
<linearGradient id="gring" x1="0" x2="1" y1="0" y2="0"><stop offset="0" stop-color="#c4c4c4"/><stop offset="0.4" stop-color="#fafafa"/><stop offset="1" stop-color="#a8a8a8"/></linearGradient>
<linearGradient id="gpad" x1="0" x2="0" y1="0" y2="1"><stop offset="0" stop-color="#3c3c3c"/><stop offset="1" stop-color="#1a1a1a"/></linearGradient>
<linearGradient id="gbody" x1="0" x2="1" y1="0" y2="0"><stop offset="0" stop-color="#6e6e6e"/><stop offset="0.5" stop-color="#f0f0f0"/><stop offset="1" stop-color="#7a7a7a"/></linearGradient>
<linearGradient id="gpanel" x1="0" x2="0" y1="0" y2="1"><stop offset="0" stop-color="#ffffff"/><stop offset="1" stop-color="#d6d6d6"/></linearGradient>
<radialGradient id="gball" cx="0.4" cy="0.3" r="0.7"><stop offset="0" stop-color="#ff8a8a"/><stop offset="0.45" stop-color="#c01818"/><stop offset="1" stop-color="#600000"/></radialGradient>
<radialGradient id="gsph" cx="0.45" cy="0.35" r="0.65"><stop offset="0" stop-color="#fdfdfd"/><stop offset="0.55" stop-color="#dadada"/><stop offset="1" stop-color="#a0a0a0"/></radialGradient>


</defs>
<!-- lines -->
<path d="M1172.7 353V636" stroke="#555" stroke-width="1.1"/>
<path d="M1156 618.4H1416" stroke="#3a3a3a" stroke-width="1.2"/>
<path d="M1338 511.6H1416" stroke="#777" stroke-width="1.1"/>
<path d="M1405.6 520V610" stroke="#333" stroke-width="1.2"/>
<path d="M1405.6 511.6L1401.3 527H1409.9Z M1405.6 618.4L1401.3 603H1409.9Z" fill="#111"/>
<circle cx="1172.7" cy="618.4" r="13.8" fill="#fff" stroke="#333" stroke-width="1.1"/>
<circle cx="1172.7" cy="618.4" r="8.3" fill="none" stroke="#333" stroke-width="1.1"/>
<path d="M1172.7 618.4H1181A8.3 8.3 0 0 1 1172.7 626.7Z" fill="#111"/>
<path d="M1172.7 600V636M1156 618.4H1190" stroke="#333" stroke-width="1"/>
<text x="1413" y="568" font-family="Liberation Sans" font-size="17.5" letter-spacing="2.2" fill="#111" stroke="#111" stroke-width="0.4">Q408</text>
<g>
<path d="M1295 374C1287 378 1286 400 1295 404Z" fill="#1e1e1e"/>
<path d="M1372 374C1380 378 1381 400 1372 404Z" fill="#1e1e1e"/>
<rect x="1293.7" y="322.9" width="80" height="84" fill="url(#gcyl)" stroke="#6a6a6a" stroke-width="0.8"/>
<rect x="1301.2" y="376" width="25.6" height="28" rx="4.5" fill="url(#gpad)"/>
<rect x="1340" y="376" width="24.6" height="28" rx="4.5" fill="url(#gpad)"/>
<rect x="1292.7" y="406.5" width="81.3" height="11" fill="url(#gring)" stroke="#7a7a7a" stroke-width="0.8"/>
<rect x="1327" y="408" width="13" height="8" fill="#eee" stroke="#999" stroke-width="0.7"/>
<rect x="1306.3" y="417.5" width="53.6" height="9.8" rx="2" fill="url(#gring)" stroke="#7a7a7a" stroke-width="0.8"/>
<rect x="1326.8" y="427" width="13.6" height="12" fill="url(#gring)" stroke="#888" stroke-width="0.7"/>
<rect x="1329.6" y="439" width="7.6" height="5.5" fill="url(#gring)" stroke="#888" stroke-width="0.6"/>
<path d="M1329.6 444.3H1337.2L1336.3 460.4H1331Z" fill="#1c1c1c"/>
<rect x="1331" y="460" width="5.2" height="41" fill="url(#gring)" stroke="#888" stroke-width="0.6"/>
<circle cx="1333.8" cy="505.8" r="6.6" fill="url(#gball)" stroke="#5a0000" stroke-width="0.6"/>
</g>
<!-- calibration artifact -->
<rect x="1321.1" y="642" width="25.2" height="16" fill="url(#gring)" stroke="#777" stroke-width="0.8"/>
<path d="M1316 657.7H1351L1361.6 671.6H1305.7Z" fill="#5c5c5c" stroke="#555" stroke-width="0.8"/>
<rect x="1305.7" y="671.6" width="55.9" height="16.9" fill="url(#gring)" stroke="#6a6a6a" stroke-width="0.8"/>
<path d="M1306 682.5H1361" stroke="#777" stroke-width="1.2"/>
<path d="M1306.7 688.5L1300.5 733Q1298 745 1289.4 753V840H1378V753Q1369.5 745 1367 733L1361.2 688.5Z" fill="url(#gbody)" stroke="#555" stroke-width="0.9"/>
<path d="M1291.8 840V778C1292 764 1300 756 1311 753.9C1322 756 1330.2 764 1330.4 778V840Z" fill="url(#gpanel)" stroke="#8a8a8a" stroke-width="0.8"/>
<path d="M1335.4 840V778C1335.6 764 1344 756 1355.7 753.9C1367 756 1375.8 764 1376 778V840Z" fill="url(#gpanel)" stroke="#8a8a8a" stroke-width="0.8"/>
<circle cx="1333.8" cy="618.4" r="27.4" fill="url(#gsph)" stroke="#666" stroke-width="1"/>
<path d="M1306.4 618.4H1361.2" stroke="#555" stroke-width="1" stroke-dasharray="22 4 4 4"/>
<!-- boxes -->
<rect x="1484.4" y="376.1" width="167.3" height="208.2" fill="#555"/>
<rect x="1481.4" y="373.1" width="167.3" height="208.2" fill="#fff" stroke="#9a9a9a" stroke-width="1"/>
<rect x="1484.1" y="656.2" width="166.8" height="208.1" fill="#555"/>
<rect x="1481.1" y="653.2" width="166.8" height="208.1" fill="#fff" stroke="#9a9a9a" stroke-width="1"/>
<text x="1564" y="339.3" text-anchor="middle" font-family="Liberation Sans" font-size="16.3" letter-spacing="2.4" fill="#111" stroke="#111" stroke-width="0.4">Q408&gt;0</text>
<text x="1563" y="365.5" text-anchor="middle" font-family="Liberation Sans" font-size="16.3" letter-spacing="0.6" fill="#111" stroke="#111" stroke-width="0.4">TURN</text>
<text x="1563" y="621" text-anchor="middle" font-family="Liberation Sans" font-size="16.3" letter-spacing="2.4" fill="#111" stroke="#111" stroke-width="0.4">Q408=0</text>
<text x="1561.5" y="647" text-anchor="middle" font-family="Liberation Sans" font-size="16.3" letter-spacing="0.6" fill="#111" stroke="#111" stroke-width="0.4">MOVE</text>
<g transform="translate(1543.7 482.1) rotate(30) scale(0.49) translate(-1333.8 -505.8)">
<path d="M1295 374C1287 378 1286 400 1295 404Z" fill="#1e1e1e"/>
<path d="M1372 374C1380 378 1381 400 1372 404Z" fill="#1e1e1e"/>
<rect x="1293.7" y="322.9" width="80" height="84" fill="url(#gcyl)" stroke="#6a6a6a" stroke-width="0.8"/>
<rect x="1301.2" y="376" width="25.6" height="28" rx="4.5" fill="url(#gpad)"/>
<rect x="1340" y="376" width="24.6" height="28" rx="4.5" fill="url(#gpad)"/>
<rect x="1292.7" y="406.5" width="81.3" height="11" fill="url(#gring)" stroke="#7a7a7a" stroke-width="0.8"/>
<rect x="1327" y="408" width="13" height="8" fill="#eee" stroke="#999" stroke-width="0.7"/>
<rect x="1306.3" y="417.5" width="53.6" height="9.8" rx="2" fill="url(#gring)" stroke="#7a7a7a" stroke-width="0.8"/>
<rect x="1326.8" y="427" width="13.6" height="12" fill="url(#gring)" stroke="#888" stroke-width="0.7"/>
<rect x="1329.6" y="439" width="7.6" height="5.5" fill="url(#gring)" stroke="#888" stroke-width="0.6"/>
<path d="M1329.6 444.3H1337.2L1336.3 460.4H1331Z" fill="#1c1c1c"/>
<rect x="1331" y="460" width="5.2" height="41" fill="url(#gring)" stroke="#888" stroke-width="0.6"/>
<circle cx="1333.8" cy="505.8" r="6.6" fill="url(#gball)" stroke="#5a0000" stroke-width="0.6"/>
</g>
<g transform="translate(1543.6 761.5) rotate(30) scale(0.49) translate(-1333.8 -505.8)">
<path d="M1295 374C1287 378 1286 400 1295 404Z" fill="#1e1e1e"/>
<path d="M1372 374C1380 378 1381 400 1372 404Z" fill="#1e1e1e"/>
<rect x="1293.7" y="322.9" width="80" height="84" fill="url(#gcyl)" stroke="#6a6a6a" stroke-width="0.8"/>
<rect x="1301.2" y="376" width="25.6" height="28" rx="4.5" fill="url(#gpad)"/>
<rect x="1340" y="376" width="24.6" height="28" rx="4.5" fill="url(#gpad)"/>
<rect x="1292.7" y="406.5" width="81.3" height="11" fill="url(#gring)" stroke="#7a7a7a" stroke-width="0.8"/>
<rect x="1327" y="408" width="13" height="8" fill="#eee" stroke="#999" stroke-width="0.7"/>
<rect x="1306.3" y="417.5" width="53.6" height="9.8" rx="2" fill="url(#gring)" stroke="#7a7a7a" stroke-width="0.8"/>
<rect x="1326.8" y="427" width="13.6" height="12" fill="url(#gring)" stroke="#888" stroke-width="0.7"/>
<rect x="1329.6" y="439" width="7.6" height="5.5" fill="url(#gring)" stroke="#888" stroke-width="0.6"/>
<path d="M1329.6 444.3H1337.2L1336.3 460.4H1331Z" fill="#1c1c1c"/>
<rect x="1331" y="460" width="5.2" height="41" fill="url(#gring)" stroke="#888" stroke-width="0.6"/>
<circle cx="1333.8" cy="505.8" r="6.6" fill="url(#gball)" stroke="#5a0000" stroke-width="0.6"/>
</g>
<g>
<rect x="1538" y="534" width="13" height="11" fill="url(#gring)" stroke="#888" stroke-width="0.7"/>
<path d="M1537 545H1552L1558.3 550.5V553.5H1530.6V550.5Z" fill="url(#gring)" stroke="#888" stroke-width="0.7"/>
<circle cx="1544.4" cy="522" r="13.9" fill="url(#gsph)" stroke="#777" stroke-width="0.8"/>
</g>
<g transform="translate(-0.6 278.6)">
<rect x="1538" y="534" width="13" height="11" fill="url(#gring)" stroke="#888" stroke-width="0.7"/>
<path d="M1537 545H1552L1558.3 550.5V553.5H1530.6V550.5Z" fill="url(#gring)" stroke="#888" stroke-width="0.7"/>
<circle cx="1544.4" cy="522" r="13.9" fill="url(#gsph)" stroke="#777" stroke-width="0.8"/>
</g>
<g fill="none" stroke="#e31b1b" stroke-width="2">
<path d="M1613.8 484.6Q1592 494 1561.5 492.2M1577 486L1561 492.2L1577 499.5"/>
<path d="M1613.2 764.7Q1592 773.5 1561.5 772.1M1577 766L1561 772.1L1577 779.5"/>
<path d="M1570.3 844.7H1527M1541.8 838L1527 844.7L1541.8 851.4"/>
</g>
</svg>

<!-- header -->
<svg width="24" height="18" style="left:15px;top:83px"><path d="M22 9H2M9.5 1.5L2 9L9.5 16.5" fill="none" stroke="#fff" stroke-width="2"/></svg>
<div class="a" style="left:68px;top:81px;font-size:18.5px;line-height:22px;color:#c9d300;letter-spacing:0.2px;-webkit-text-stroke:0.3px #c9d300">Editor</div>
<div class="a" style="left:1480px;top:65px;width:194px;height:45px;background:#fff"></div>
<div class="a" style="left:1525px;top:65px;width:5px;height:47px;background:#2c3034"></div>
<div class="a" style="left:1575px;top:65px;width:5px;height:47px;background:#2c3034"></div>
<div class="a" style="left:1625px;top:65px;width:5px;height:47px;background:#2c3034"></div>
<svg width="34" height="30" style="left:1485px;top:68px"><path d="M17 1L33 29.5H1Z" fill="#111" stroke="#111" stroke-width="1.5" stroke-linejoin="round"/><path d="M10 19.5L14.5 23.5L23.5 15" fill="none" stroke="#fff" stroke-width="2.8"/></svg>
<svg width="26" height="26" style="left:1539px;top:75px"><circle cx="13" cy="12.5" r="11.2" fill="none" stroke="#111" stroke-width="2"/><text x="13" y="18.5" text-anchor="middle" font-family="Liberation Sans" font-size="16" font-weight="bold" fill="#111">?</text></svg>
<svg width="40" height="40" viewBox="1585 70 40 40" style="left:1585px;top:70px"><g fill="#111"><rect x="1597" y="79" width="9" height="4.2"/><path d="M1605 75L1612.5 81.1L1605 87.2Z"/><rect x="1596" y="85.8" width="11" height="4.2"/><path d="M1597 81.8L1589.3 87.9L1597 94Z"/></g><path d="M1600.5 96.5Q1601.5 92 1606 93.5" fill="none" stroke="#111" stroke-width="1.3"/><rect x="1606.3" y="94.5" width="9.5" height="7" rx="1" fill="none" stroke="#111" stroke-width="1.6"/><circle cx="1611" cy="98" r="1.1" fill="#111"/></svg>
<svg width="30" height="25" style="left:1636px;top:76px"><g fill="#fff" stroke="#111" stroke-width="1.8"><rect x="1.5" y="1" width="15.5" height="12"/><rect x="6.5" y="6" width="15.5" height="12"/><rect x="11.5" y="11" width="15.5" height="12"/></g><g fill="#111"><rect x="1.5" y="0.5" width="15.5" height="2.5"/><rect x="6.5" y="5.5" width="15.5" height="2.5"/><rect x="11.5" y="10.5" width="15.5" height="2.5"/></g></svg>
<!-- tab -->
<div class="a" style="left:54px;top:120px;width:200px;height:35px;background:#e5e5e5"></div>
<svg width="16" height="20" style="left:64px;top:128px"><path d="M1 1H9.5L15 6.5V19H1Z" fill="none" stroke="#111" stroke-width="1.9" stroke-linejoin="round"/><path d="M9 1V7H15" fill="none" stroke="#111" stroke-width="1.7"/></svg>
<div class="a s" style="left:94px;top:128px;line-height:18px;color:#1a1a1a">Kinematics-OPT.H</div>
<svg width="11" height="11" style="left:234px;top:132px"><path d="M1 1L10 10M10 1L1 10" stroke="#222" stroke-width="1.9"/></svg>
<svg width="16" height="16" style="left:263px;top:129px"><path d="M8 0.5V15.5M0.5 8H15.5" stroke="#fff" stroke-width="2.6"/></svg>
<div class="a" style="left:1514px;top:120px;width:151px;height:36px;background:#fff"></div>
<svg width="21" height="20" style="left:1531px;top:128px"><g fill="none" stroke="#111" stroke-width="2.2"><rect x="1.1" y="1.1" width="6.5" height="9" rx="0.5"/><rect x="12" y="1.1" width="8" height="4.5" rx="0.5"/><rect x="1.1" y="14" width="6.5" height="4.5" rx="0.5"/><rect x="12" y="9.5" width="8" height="9" rx="0.5"/></g></svg>
<div class="a s" style="left:1568px;top:129px;line-height:18px;color:#111">Workspaces</div>
<svg width="10" height="7" style="left:1646px;top:134px"><path d="M0 0H10L5 6.5Z" fill="#111"/></svg>
<!-- left sidebar icons -->
<svg width="28" height="30" style="left:13px;top:131px"><path d="M2 28.5V11L13.5 1.8L25 11V28.5H18V19.5H9V28.5Z" fill="none" stroke="#fff" stroke-width="2.6" stroke-linejoin="miter"/></svg>
<svg width="28" height="24" style="left:13px;top:189px"><path d="M2 21V2H9L12 6H25.5V21Z" fill="none" stroke="#fff" stroke-width="2.6"/></svg>
<svg width="28" height="24" style="left:13px;top:242px"><rect x="1.8" y="2" width="23.5" height="20" fill="none" stroke="#fff" stroke-width="2.6"/><path d="M2 8.5H25M2 15H25M9 8.5V22" stroke="#fff" stroke-width="2.6"/></svg>
<div class="a" style="left:0;top:283px;width:54px;height:55px;background:#4c4e23"></div>
<div class="a" style="left:0;top:283px;width:3px;height:55px;background:#d8e400"></div>
<svg width="34" height="36" style="left:13px;top:294px"><g fill="none" stroke="#d4e000" stroke-width="2.3"><path d="M19 29H2V2H24V12"/><path d="M6 8H18M6 13H15M6 18H12"/><path d="M15 21L23.5 12.5L32 21L23.5 29.5Z"/><path d="M18.5 21H27M24 17.5L27.5 21L24 24.5"/></g></svg>
<svg width="24" height="32" style="left:16px;top:348px"><g transform="translate(-16 -348)"><path d="M16.6 366V359Q16.6 356.3 19.6 356.3Q20.9 356.3 21.6 357V353.8Q21.6 351.2 24.2 351.2Q25.4 351.2 26 351.8V350.9Q26 348.5 28.5 348.5Q31 348.5 31 350.9V352.4Q31.6 351.8 32.9 351.8Q36.6 351.8 36.6 354.6V366.5H34.6V361.8H18.8V366Z" fill="#fff"/><path d="M21.8 357.2V361.8M26.1 352V361.8M30.8 352.5V361.8" stroke="#23272b" stroke-width="1.3"/><path d="M22.8 376L17.7 366.3V362M35.6 362V366.8L31 376" fill="none" stroke="#fff" stroke-width="2.1" stroke-linecap="round"/></g></svg>
<svg width="54" height="40" style="left:0;top:400px"><g fill="#fff"><rect x="14" y="4" width="14.5" height="2.5"/><rect x="14" y="30.5" width="14.5" height="2.5"/><path d="M28.5 4L40.5 18.5L28.5 33Z"/><rect x="14" y="16.6" width="7.5" height="4.2"/><path d="M21 12.5L27 18.7L21 25Z"/></g></svg>
<svg width="54" height="30" style="left:0;top:458px"><g fill="#fff"><path d="M10 4.6H17.1V21.3H34.3V4.6H44.2V28H10Z"/><rect x="20.7" y="2" width="7.3" height="12.5"/><rect x="22.5" y="14" width="3.2" height="2.8"/><rect x="17.6" y="18.2" width="13.5" height="2.2"/></g><rect x="36.5" y="10" width="3.6" height="10" fill="#23272b"/></svg>
<svg width="40" height="40" style="left:7px;top:613px"><circle cx="20" cy="20" r="15.5" fill="none" stroke="#fff" stroke-width="6"/></svg>
<svg width="24" height="32" style="left:16px;top:666px"><g transform="translate(-16 -348)"><path d="M16.6 366V359Q16.6 356.3 19.6 356.3Q20.9 356.3 21.6 357V353.8Q21.6 351.2 24.2 351.2Q25.4 351.2 26 351.8V350.9Q26 348.5 28.5 348.5Q31 348.5 31 350.9V352.4Q31.6 351.8 32.9 351.8Q36.6 351.8 36.6 354.6V366.5H34.6V361.8H18.8V366Z" fill="#fff"/><path d="M21.8 357.2V361.8M26.1 352V361.8M30.8 352.5V361.8" stroke="#23272b" stroke-width="1.3"/><path d="M22.8 376L17.7 366.3V362M35.6 362V366.8L31 376" fill="none" stroke="#fff" stroke-width="2.1" stroke-linecap="round"/></g></svg>
<div class="a" style="left:0;top:713px;width:54px;text-align:center;font-size:17.5px;font-weight:bold;line-height:22px;color:#fff;letter-spacing:-0.3px;transform:scaleX(.86)">00:00</div>
<div class="a" style="left:5px;top:767px;width:41px;font-size:12px;line-height:15px;color:#fff;letter-spacing:-0.3px"><div style="display:flex;justify-content:space-between"><span>T</span><span>0</span></div><div style="display:flex;justify-content:space-between"><span>F</span><span>0</span></div><div style="display:flex;justify-content:space-between"><span>S</span><span style="letter-spacing:-0.6px">10000</span></div></div>
<svg width="14" height="14" style="left:4px;top:820px"><circle cx="7" cy="7" r="5" fill="none" stroke="#bbb" stroke-width="1.3"/><path d="M7 0V14M0 7H14" stroke="#bbb" stroke-width="1.3"/></svg>
<div class="a" style="left:35px;top:819px;width:11px;text-align:right;font-size:12px;line-height:15px;color:#fff">2</div>
<div class="a" style="left:4px;top:834px;font-size:11px;line-height:15px;color:#fff;letter-spacing:-0.8px">50x50x80</div>
<svg width="24" height="32" style="left:15px;top:865px"><rect x="1.5" y="1.5" width="20" height="28" fill="none" stroke="#fff" stroke-width="2.4"/><rect x="5" y="5" width="13" height="5" fill="none" stroke="#fff" stroke-width="1.6"/><g fill="#fff"><rect x="5" y="13" width="3" height="3"/><rect x="10" y="13" width="3" height="3"/><rect x="15" y="13" width="3" height="3"/><rect x="5" y="18" width="3" height="3"/><rect x="10" y="18" width="3" height="3"/><rect x="15" y="18" width="3" height="3"/><rect x="5" y="23" width="3" height="3"/><rect x="10" y="23" width="3" height="3"/><rect x="15" y="23" width="3" height="3"/></g></svg>
<svg width="32" height="22" style="left:11px;top:908px"><rect x="1.3" y="1.3" width="29" height="19" fill="none" stroke="#fff" stroke-width="2.4"/><g fill="#fff"><rect x="5" y="5" width="2.5" height="2.5"/><rect x="9.5" y="5" width="2.5" height="2.5"/><rect x="14" y="5" width="2.5" height="2.5"/><rect x="18.5" y="5" width="2.5" height="2.5"/><rect x="23" y="5" width="2.5" height="2.5"/><rect x="5" y="9.5" width="2.5" height="2.5"/><rect x="9.5" y="9.5" width="2.5" height="2.5"/><rect x="14" y="9.5" width="2.5" height="2.5"/><rect x="18.5" y="9.5" width="2.5" height="2.5"/><rect x="23" y="9.5" width="2.5" height="2.5"/><rect x="8" y="14" width="15" height="2.5"/></g></svg>
<svg width="30" height="30" viewBox="-15 -15 30 30" style="left:12px;top:942px"><path d="M-2.2 -13H2.2L2.9 -9.8L5.3 -8.7L8.1 -10.5L11.2 -7.4L9.4 -4.6L10.4 -2.2L13.6 -1.5V2.9L10.3 3.5L9.4 5.8L11.2 8.6L8 11.8L5.2 10L2.8 11L2.2 14.1H-2.2L-2.8 10.8L-5.3 9.9L-8.1 11.7L-11.3 8.5L-9.5 5.7L-10.4 3.4L-13.7 2.7V-1.7L-10.3 -2.3L-9.4 -4.6L-11.1 -7.4L-8.1 -10.5L-5.3 -8.7L-2.9 -9.8Z" fill="none" stroke="#fff" stroke-width="2.2" stroke-linejoin="round"/><circle cx="0" cy="0.5" r="4.5" fill="none" stroke="#fff" stroke-width="2.2"/></svg>
<div class="a" style="left:0;top:986px;width:54px;text-align:center;font-size:17px;font-weight:bold;line-height:21px;color:#fff;letter-spacing:-0.3px;transform:scaleX(.86)">13:28</div>
<svg width="22" height="16" style="left:17px;top:1017px"><path d="M2 2L8.5 8L2 14M11 2L17.5 8L11 14" fill="none" stroke="#fff" stroke-width="3"/></svg>
<!-- right sidebar icons -->
<svg width="42" height="20" style="left:1690px;top:135px"><g fill="none" stroke="#fff" stroke-width="2.4"><rect x="13" y="2" width="27" height="16"/><rect x="7.5" y="2" width="4" height="16"/><path d="M7.5 7.5H2.5V11.5H7.5"/></g></svg>
<svg width="24" height="34" style="left:1699px;top:183px"><g fill="none" stroke="#fff" stroke-width="2.4"><path d="M5 1V17M19 1V17"/><rect x="2" y="17" width="20" height="8" rx="1"/><path d="M6 25V28C6 31 18 31 18 28V25"/></g></svg>
<svg width="32" height="32" style="left:1695px;top:239px"><g stroke="#fff" stroke-width="2.4" fill="none"><path d="M16 1V31M1 16H31M5.4 5.4L26.6 26.6M26.6 5.4L5.4 26.6"/><path d="M12 2.5L16 6L20 2.5M12 29.5L16 26L20 29.5M2.5 12L6 16L2.5 20M29.5 12L26 16L29.5 20"/></g></svg>
<svg width="38" height="32" style="left:1692px;top:293px"><g fill="none" stroke="#fff" stroke-width="2.4"><path d="M5 1.5V19L2 30H9L12 21V1.5"/><rect x="19" y="1.5" width="15" height="28"/><path d="M19 15L34 3M19 27L34 15M22 29.5L34 21"/></g><path d="M4 24L10 22L8 28Z" fill="#fff"/></svg>
<svg width="36" height="38" style="left:1692px;top:344px"><g fill="#fff"><rect x="14" y="2" width="6" height="9"/><rect x="2" y="10" width="31" height="28"/></g><g fill="#23272b"><rect x="7" y="13" width="5" height="19"/><rect x="20" y="13" width="4.5" height="19"/></g><rect x="13.5" y="13" width="5" height="19" fill="#bbb"/><rect x="15" y="13" width="2" height="19" fill="#fff"/><rect x="28" y="23" width="8" height="8" fill="#fff" stroke="#23272b" stroke-width="1.5"/></svg>
<svg width="36" height="34" style="left:1693px;top:401px"><path d="M17.5 2.5L21.6 12.3L32.2 12.8L24 19.6L26.8 30L17.5 24.1L8.2 30L11 19.6L2.8 12.8L13.4 12.3Z" fill="none" stroke="#fff" stroke-width="2.4" stroke-linejoin="round"/></svg>
<svg width="40" height="40" style="left:1690px;top:508px"><path d="M2.5 22A17.5 17.5 0 0 1 37.5 22" fill="none" stroke="#fff" stroke-width="2.2"/><circle cx="20" cy="22" r="13.5" fill="none" stroke="#fff" stroke-width="2.2"/><text x="19" y="28" text-anchor="middle" font-family="Liberation Sans" font-size="15" fill="#fff">F</text><path d="M24 15L27 10" stroke="#fff" stroke-width="2"/></svg>
<svg width="40" height="40" style="left:1690px;top:561px"><path d="M2.5 22A17.5 17.5 0 0 1 37.5 22" fill="none" stroke="#fff" stroke-width="2.2"/><circle cx="20" cy="22" r="13.5" fill="none" stroke="#fff" stroke-width="2.2"/><text x="19" y="28" text-anchor="middle" font-family="Liberation Sans" font-size="15" fill="#fff">S</text><path d="M24 15L27 10" stroke="#fff" stroke-width="2"/></svg>
<svg width="40" height="40" viewBox="1690 670 40 40" style="left:1690px;top:670px"><path d="M1702 676H1716.5V673.8H1722V706.6H1699.6V701H1702.3V696.3H1713.6V684H1710.2V686.4H1703.6V681H1702Z" fill="none" stroke="#fff" stroke-width="1.9" stroke-linejoin="miter"/><path d="M1704.5 678.8H1713.5M1704.3 698.6H1711.5M1701.8 703.8H1719.5" stroke="#fff" stroke-width="0"/></svg>
<div class="a" style="left:1684px;top:784px;width:54px;text-align:center;font-size:12px;line-height:14px;color:#fff;letter-spacing:-0.5px">Limit<br>01</div>
<svg width="34" height="34" style="left:1694px;top:944px"><g fill="none" stroke="#fff" stroke-width="2.2"><circle cx="14" cy="8.5" r="6.5"/><path d="M1.5 28C1.5 20 7 16 14 16C17 16 19 17 21 18"/></g><circle cx="24" cy="24.5" r="8.5" fill="#fff"/><path d="M20.5 21L27.5 28M26 19.5A3 3 0 0 0 29 23" fill="none" stroke="#23272b" stroke-width="2"/></svg>
<svg width="22" height="16" style="left:1700px;top:1017px"><path d="M19.5 2L13 8L19.5 14M10.5 2L4 8L10.5 14" fill="none" stroke="#fff" stroke-width="3"/></svg>

<!-- info bar -->
<svg width="20" height="20" style="left:85px;top:892px"><circle cx="10" cy="10" r="8.3" fill="none" stroke="#111" stroke-width="1.6"/><rect x="9" y="8.5" width="2" height="7" fill="#111"/><circle cx="10" cy="5.5" r="1.2" fill="#111"/></svg>
<div class="a s" style="left:113px;top:893px;line-height:18px;color:#111">Retraction height?</div>
<!-- number btn -->
<div class="a" style="left:90px;top:925px;width:91px;height:37px;border:2px solid #c8c8c8;border-radius:3px;background:linear-gradient(#383c40,#2a2e31)"></div><div class="a s sc" style="left:90px;top:925px;width:91px;height:37px;color:#fff;text-align:center;line-height:37px">Number</div>
<!-- bottom bar -->
<svg width="24" height="14" style="left:68px;top:1009px"><g fill="#111"><rect x="1" y="2" width="11" height="2.4"/><rect x="1" y="6.5" width="11" height="2.4"/><rect x="1" y="11" width="11" height="2.4"/><path d="M14 8.5L18.5 3.5L23 8.5Z"/></g></svg>
<div class="a" style="left:103px;top:995px;width:2px;height:41px;background:#c4c4c4"></div>
<div class="a s sc" style="left:104px;top:993px;width:110px;text-align:center;line-height:18px;color:#9a9a9a">Klartext editor</div>
<div class="a" style="left:139px;top:1020px;width:36px;height:16px;border-radius:8px;background:#d6dc6c"></div>
<div class="a" style="left:160px;top:1021px;width:14px;height:14px;border-radius:7px;background:#7d7e62"></div>
<div class="a" style="left:214px;top:995px;width:2px;height:41px;background:#c4c4c4"></div>
<div class="a s sc" style="left:215px;top:998px;width:110px;text-align:center;line-height:18px;color:#111">Insert<br>NC function</div>
<div class="a" style="left:324px;top:995px;width:2px;height:41px;background:#c4c4c4"></div>
<div class="a s sc" style="left:325px;top:998px;width:110px;text-align:center;line-height:18px;color:#111">GOTO<br>block number</div>
<div class="a" style="left:435px;top:995px;width:2px;height:41px;background:#c4c4c4"></div>
<div class="a s sc" style="left:436px;top:1007px;width:109px;text-align:center;line-height:18px;color:#111">Q info</div>
<div class="a" style="left:545px;top:995px;width:2px;height:41px;background:#c4c4c4"></div>
<div class="a s" style="left:558px;top:1007px;line-height:18px;color:#9a9a9a;font-size:15px">/</div>
<div class="a s" style="left:576px;top:998px;line-height:18px;color:#9a9a9a">Skip block off/<br>on</div>
<div class="a" style="left:655px;top:995px;width:2px;height:41px;background:#c4c4c4"></div>
<div class="a s" style="left:669px;top:1007px;line-height:18px;color:#9a9a9a;font-size:15px">;</div>
<div class="a s" style="left:686px;top:998px;line-height:18px;color:#9a9a9a">Comment Off/<br>On</div>
<div class="a" style="left:766px;top:995px;width:2px;height:41px;background:#c4c4c4"></div>
<div class="a s sc" style="left:767px;top:1007px;width:109px;text-align:center;line-height:18px;color:#9a9a9a">Edit</div>
<div class="a" style="left:876px;top:995px;width:2px;height:41px;background:#c4c4c4"></div>
<div class="a" style="left:1459px;top:995px;width:2px;height:41px;background:#c4c4c4"></div>
<div class="a s sc" style="left:1460px;top:998px;width:110px;text-align:center;line-height:18px;color:#111">Select in<br>Program Run</div>
<div class="a" style="left:1569px;top:995px;width:2px;height:41px;background:#c4c4c4"></div>
<svg width="16" height="19" style="left:1577px;top:1007px"><path d="M0 0L16 9.5L0 19Z" fill="#111"/></svg>
<div class="a s" style="left:1598px;top:998px;line-height:18px;color:#111">Start the<br>simulation</div>

</body></html>
